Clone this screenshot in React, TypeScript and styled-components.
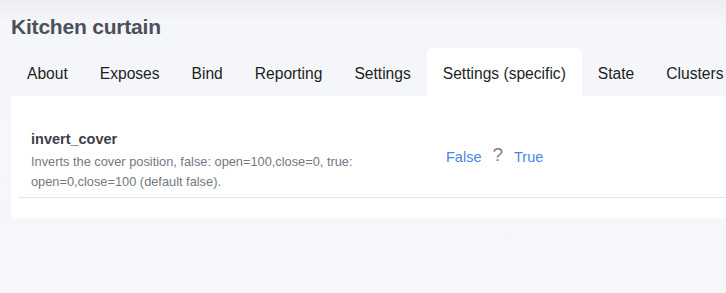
import React from "react"
import styled, { createGlobalStyle } from "styled-components"

const GlobalStyle = createGlobalStyle`
    html, body {
        margin: 0;
        padding: 0;
    }
    body {
        background: linear-gradient(to bottom, #eceef2 0px, #f5f6fa 22px, #f6f7fb 100%);
        font-family: "Liberation Sans", Arial, sans-serif;
        min-height: 293px;
        overflow: hidden;
    }
`

const Page = styled.div`
    padding: 0 0 0 11px;
    width: 760px;
`

const Title = styled.h2`
    margin: 0;
    padding-top: 14px;
    height: 34px;
    font-size: 21px;
    font-weight: 600;
    line-height: 25px;
    color: #4b5159;
    letter-spacing: -0.2px;
`

const Tabs = styled.ul`
    display: flex;
    list-style: none;
    margin: 0;
    padding: 0;
`

const Tab = styled.li<{ $active?: boolean }>`
    padding: 0 15px;
    border: 1px solid transparent;
    border-bottom: 0;
    height: 47px;
    line-height: 49px;
    font-size: 15.6px;
    color: #1c1f23;
    white-space: nowrap;
    background: ${(p) => (p.$active ? "#ffffff" : "transparent")};
    border-radius: 5px 5px 0 0;
`

const Card = styled.div`
    background: #ffffff;
    border-radius: 0 0 5px 5px;
    padding: 0 0 20px 8px;
`

const Row = styled.div`
    display: grid;
    grid-template-columns: 415px 1fr;
    align-items: start;
    padding: 33px 0 5px 12px;
    border-bottom: 1px solid #e3e5ea;
`

const Info = styled.div`
    display: flex;
    flex-direction: column;
`

const Name = styled.div`
    font-size: 14.5px;
    font-weight: 600;
    color: #3c4046;
    line-height: 20px;
    margin-bottom: 3px;
`

const Description = styled.div`
    font-size: 12.8px;
    color: #737980;
    line-height: 20px;
    width: 360px;
`

const Choices = styled.div`
    display: flex;
    align-items: center;
    gap: 10px;
    margin-top: 18px;
    height: 20px;
`

const Choice = styled.span`
    color: #4a86e8;
    font-size: 14.5px;
`

const Unknown = styled.span`
    color: #7d838a;
    font-size: 19px;
    padding: 0 1px;
    margin-top: -4px;
`

const tabs = [
    "About",
    "Exposes",
    "Bind",
    "Reporting",
    "Settings",
    "Settings (specific)",
    "State",
    "Clusters",
]

const App: React.FC = () => {
    return (
        <>
            <GlobalStyle />
            <Page>
                <Title>Kitchen curtain</Title>
                <Tabs>
                    {tabs.map((t) => (
                        <Tab key={t} $active={t === "Settings (specific)"}>
                            {t}
                        </Tab>
                    ))}
                </Tabs>
                <Card>
                    <Row>
                        <Info>
                            <Name>invert_cover</Name>
                            <Description>
                                Inverts the cover position, false: open=100,close=0, true:
                                open=0,close=100 (default false).
                            </Description>
                        </Info>
                        <Choices>
                            <Choice>False</Choice>
                            <Unknown>?</Unknown>
                            <Choice>True</Choice>
                        </Choices>
                    </Row>
                </Card>
            </Page>
        </>
    )
}

export default App
